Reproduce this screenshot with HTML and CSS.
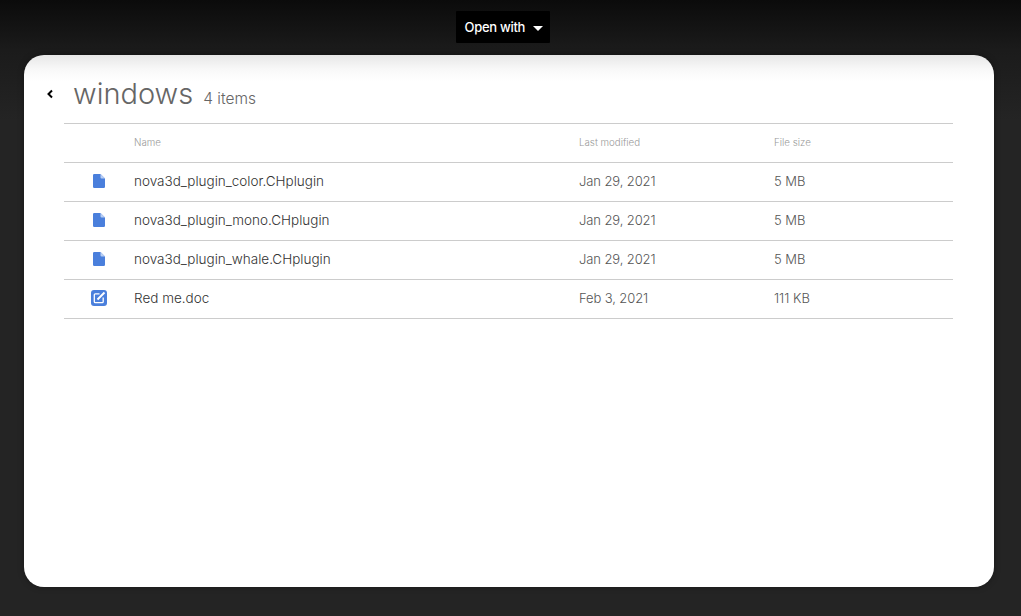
FILE: index.html
```html
<!DOCTYPE html>
<html lang="en">
<head>
<meta charset="utf-8">
<title>windows</title>
<link rel="stylesheet" href="styles.css">
</head>
<body>
<header class="topbar">
  <button class="open-with">Open with
    <svg class="caret" width="10" height="5" viewBox="0 0 10 5"><path d="M0 0h10L5 5z" fill="#fff"/></svg>
  </button>
</header>
<main class="card">
  <div class="title-row">
    <svg class="back" width="8" height="10" viewBox="0 0 8 10"><path d="M6 1.500 2.500 5 6 8.500" fill="none" stroke="#000" stroke-width="2"/></svg>
    <h1 class="folder">windows</h1>
    <span class="count">4 items</span>
  </div>
  <div class="table">
    <div class="row head">
      <span></span><span>Name</span><span>Last modified</span><span>File size</span>
    </div>
    <div class="row">
      <span class="icon"><svg width="12" height="14" viewBox="0 0 12 14"><path class="doc" d="M1.200 0H7.500L12 4.500V12.800A1.200 1.200 0 0 1 10.800 14H1.200A1.200 1.200 0 0 1 0 12.800V1.200A1.200 1.200 0 0 1 1.200 0Z"/><path d="M7.500 0V3.500A1 1 0 0 0 8.500 4.500H12Z" fill="#b9cff3"/></svg></span>
      <span class="name">nova3d_plugin_color.CHplugin</span><span class="date">Jan 29, 2021</span><span>5 MB</span>
    </div>
    <div class="row">
      <span class="icon"><svg width="12" height="14" viewBox="0 0 12 14"><path class="doc" d="M1.200 0H7.500L12 4.500V12.800A1.200 1.200 0 0 1 10.800 14H1.200A1.200 1.200 0 0 1 0 12.800V1.200A1.200 1.200 0 0 1 1.200 0Z"/><path d="M7.500 0V3.500A1 1 0 0 0 8.500 4.500H12Z" fill="#b9cff3"/></svg></span>
      <span class="name">nova3d_plugin_mono.CHplugin</span><span class="date">Jan 29, 2021</span><span>5 MB</span>
    </div>
    <div class="row">
      <span class="icon"><svg width="12" height="14" viewBox="0 0 12 14"><path class="doc" d="M1.200 0H7.500L12 4.500V12.800A1.200 1.200 0 0 1 10.800 14H1.200A1.200 1.200 0 0 1 0 12.800V1.200A1.200 1.200 0 0 1 1.200 0Z"/><path d="M7.500 0V3.500A1 1 0 0 0 8.500 4.500H12Z" fill="#b9cff3"/></svg></span>
      <span class="name">nova3d_plugin_whale.CHplugin</span><span class="date">Jan 29, 2021</span><span>5 MB</span>
    </div>
    <div class="row">
      <span class="icon"><svg width="16" height="16" viewBox="0 0 16 16"><rect class="doc" width="16" height="16" rx="3"/><path d="M8.500 3.800H4.300A1 1 0 0 0 3.300 4.800V11.700A1 1 0 0 0 4.300 12.700H11.200A1 1 0 0 0 12.200 11.700V7.500" fill="none" stroke="#fff" stroke-width="1.300"/><path d="M6.500 9.500 13.500 2.500" stroke="#fff" stroke-width="2" fill="none"/></svg></span>
      <span class="name">Red me.doc</span><span class="date">Feb 3, 2021</span><span>111 KB</span>
    </div>
  </div>
</main>
</body>
</html>
```
FILE: styles.css
```css
* { box-sizing: border-box; }
html, body { height: 100%; }
body {
  margin: 0;
  padding: 0 27px 29px 24px;
  display: flex;
  flex-direction: column;
  background: linear-gradient(#0b0b0b 0, #1b1b1b 50px, #242424 120px);
  font-family: "Inter", "Liberation Sans", sans-serif;
  overflow: hidden;
}
.topbar {
  height: 55px;
  flex: none;
  display: flex;
  justify-content: center;
  padding: 11px 13px 0 0;
}
.open-with {
  width: 94px;
  height: 32px;
  background: #000;
  color: #fff;
  border: 0;
  border-radius: 1px;
  font: 500 13px "Inter", "Liberation Sans", sans-serif;
  letter-spacing: -0.3px;
  display: flex;
  align-items: center;
  justify-content: space-between;
  padding: 0 7px 0 9px;
}
.caret { margin-top: 3px; }
.card {
  flex: 1;
  background: linear-gradient(#e7e7e7 0, #f8f8f8 14px, #fff 26px);
  border-radius: 20px;
  padding: 0 41px 0 40px;
  box-shadow: 0 0 6px rgba(0, 0, 0, 0.35);
}
.title-row {
  height: 68px;
  padding-top: 21px;
  display: flex;
  align-items: baseline;
  position: relative;
}
.back { position: absolute; left: -18px; top: 34px; }
.folder {
  margin: 0 0 0 9px;
  font-size: 29px;
  font-weight: 300;
  color: #666;
}
.count { margin-left: 10px; font-size: 15.500px; font-weight: 300; color: #666; }
.table { border-top: 1px solid #ccc; }
.row {
  display: grid;
  grid-template-columns: 70px 445px 195px 1fr;
  align-items: center;
  height: 39px;
  padding-bottom: 2px;
  border-bottom: 1px solid #ccc;
  font-size: 13px;
  font-weight: 300;
  color: #555;
}
.row.head { font-size: 9.750px; color: #999; }
.name { color: #333; font-size: 13.500px; }
.date { letter-spacing: -0.1px; }
.icon { display: flex; justify-content: center; width: 70px; }
.doc { fill: #4a7fdc; }
```
